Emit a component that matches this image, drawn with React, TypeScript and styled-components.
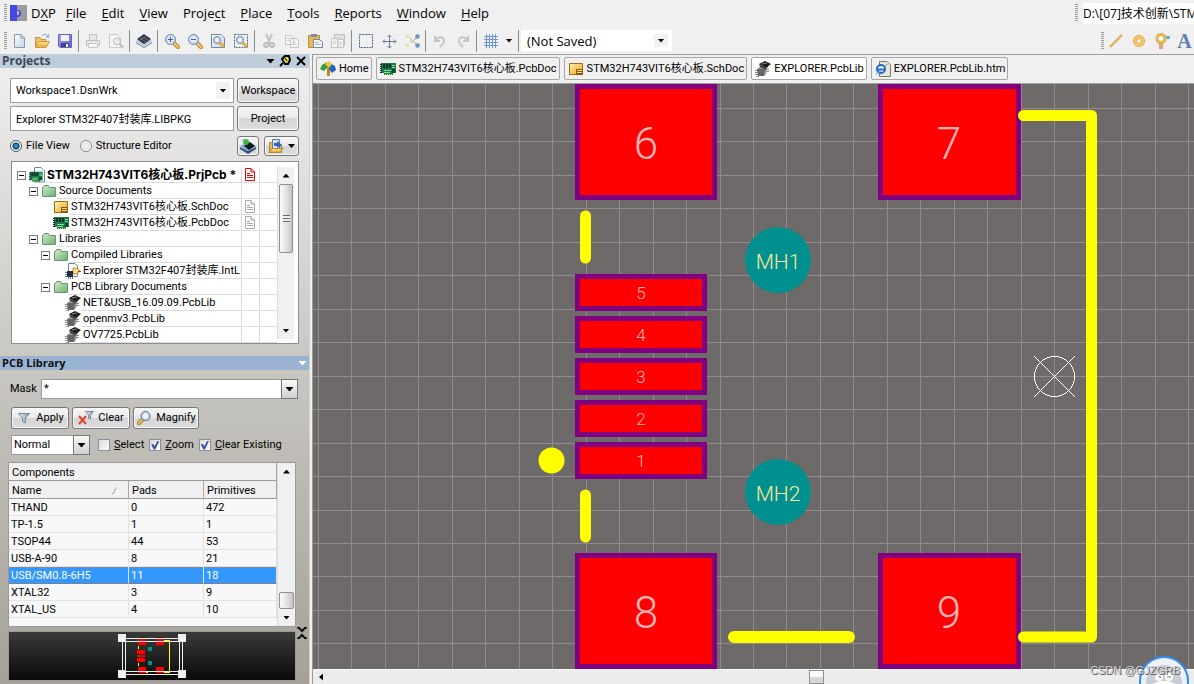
import React from 'react';
import styled, { createGlobalStyle, css } from 'styled-components';

const UI_FONT = `Roboto, "Noto Sans CJK SC", sans-serif`;
const MENU_FONT = `"Open Sans", "Noto Sans CJK SC", sans-serif`;
const STROKE_FONT = `Roboto, sans-serif`;

const GlobalStyle = createGlobalStyle`
  *, *::before, *::after { box-sizing: border-box; }
  body { margin: 0; background: #f0f0f0; color: #000; font: 11px/16px ${UI_FONT}; }
  button, input, select { font: inherit; color: inherit; margin: 0; padding: 0; }
  svg { display: block; flex: none; }
`;

/* ---------- icons ---------- */

const Gradients = () => (
  <svg width="0" height="0" style={{ position: 'absolute' }} aria-hidden="true">
    <defs>
      <linearGradient id="gFolder" x1="0" y1="0" x2="0" y2="1">
        <stop offset="0" stopColor="#ffe9a0" />
        <stop offset="1" stopColor="#e2a02c" />
      </linearGradient>
      <linearGradient id="gGreen" x1="0" y1="0" x2="1" y2="1">
        <stop offset="0" stopColor="#cdeccb" />
        <stop offset="1" stopColor="#6fb075" />
      </linearGradient>
      <linearGradient id="gPage" x1="0" y1="0" x2="1" y2="1">
        <stop offset="0" stopColor="#ffffff" />
        <stop offset="1" stopColor="#c3d3e4" />
      </linearGradient>
      <linearGradient id="gSave" x1="0" y1="0" x2="1" y2="1">
        <stop offset="0" stopColor="#a9a9f4" />
        <stop offset="1" stopColor="#5c5cd0" />
      </linearGradient>
      <linearGradient id="gSch" x1="0" y1="0" x2="1" y2="1">
        <stop offset="0" stopColor="#fff3b0" />
        <stop offset="1" stopColor="#e8a11d" />
      </linearGradient>
      <linearGradient id="gFunnel" x1="0" y1="0" x2="1" y2="0">
        <stop offset="0" stopColor="#f4f8fc" />
        <stop offset="1" stopColor="#7f93ab" />
      </linearGradient>
      <radialGradient id="gLens">
        <stop offset="0" stopColor="#ffffff" />
        <stop offset="1" stopColor="#bcd3ee" />
      </radialGradient>
    </defs>
  </svg>
);

const handle = (
  <>
    <path d="M10.500 10.500L14 14" stroke="#b98a3c" strokeWidth="4" strokeLinecap="round" />
    <path d="M10.500 10.500L14 14" stroke="#f5c860" strokeWidth="2" strokeLinecap="round" />
  </>
);

const chip = (
  <>
    <path d="M0 9.500h3M0 11.500h3M0 13.500h3M1 15.500h3M11 8.500h3M11 10.500h3" stroke="#8a8a8a" />
    <path d="M2 8L6 5H13L11 13L9 15H3Z" fill="#9a9a9a" />
    <path d="M2 8H10L9 15H3Z" fill="#666" />
    <path d="M4 3L10 0L16 3L11 7Z" fill="#1c1c1c" />
    <path d="M4 3L11 7V9L5 6Z" fill="#444" />
    <path d="M7 3L12 2" stroke="#8c8c8c" />
  </>
);

const board = (
  <>
    <path d="M1 2H16V12H13V14H4V12H1Z" fill="#1d7a48" />
    <path d="M0 3.500h2M0 5.500h2M0 7.500h2M0 9.500h2M0 11.500h2" stroke="#123" />
    <path d="M3 3h2v4H3zM6 3h2v4H6zM9 3h2v4H9z" fill="#0a3322" />
    <path d="M12 4.500h3M12 6.500h3M4 9.500h7M4 11.500h6" stroke="#7fe0a4" />
    <path d="M12 8h3v4h-3z" fill="#0d4a2c" />
    <path d="M5 13.500h1M7 13.500h1M9 13.500h1M11 13.500h1" stroke="#e8d25a" />
  </>
);

const funnel = <path d="M2.500 3.500H13.500L9.500 8V13L6.500 11.500V8Z" fill="url(#gFunnel)" stroke="#7388a2" />;

const glyphs: Record<string, React.ReactNode> = {
  new: <path d="M3.500 1.500H10L13.500 5V14.500H3.500ZM10 1.500V5H13.500" fill="url(#gPage)" stroke="#8699ae" />,
  open: (
    <>
      <path d="M1.500 14V4.500H6L7 6.500H12V9" fill="#f0c468" stroke="#c49238" />
      <path d="M1.500 14.500L4 8.500H15.500L12 14.500Z" fill="url(#gFolder)" stroke="#cc9a3c" />
      <path d="M8 3C10 0 13 1 14 4M12 3.500L14.500 4.500L15 1.500" fill="none" stroke="#7f9fc6" />
    </>
  ),
  save: (
    <>
      <path d="M1.500 1.500H14.500V14.500H3L1.500 13Z" fill="url(#gSave)" stroke="#6464c4" />
      <path d="M4 2h8v6H4z" fill="#eef0ff" />
      <path d="M4 10h8v4H4z" fill="#44448c" />
      <path d="M9 11h2v3H9z" fill="#fff" />
    </>
  ),
  print: (
    <>
      <path d="M4.500 7V1.500H12L11 7M1.500 7.500H14.500V12.500H1.500Z" fill="#e8e8e8" stroke="#c0c0c0" />
      <path d="M3.500 10.500H12.500V14.500H3.500Z" fill="#f6f6f6" stroke="#c6c6c6" />
    </>
  ),
  preview: (
    <>
      <path d="M1.500 1.500H9L12.500 5V14.500H1.500Z" fill="#f6f6f6" stroke="#c8c8c8" />
      <circle cx="9" cy="8.500" r="3.500" fill="#ececec" stroke="#b8b8b8" />
      <path d="M11.500 11L15 14.500" stroke="#bcbcbc" strokeWidth="2" />
    </>
  ),
  layers: (
    <>
      <path d="M0 9L8 14L16 9V10L8 15L0 10Z" fill="#5f7792" />
      <path d="M0 8L8 3L16 8L8 13Z" fill="#a9c3de" />
      <path d="M1 6L8 1L15 6L8 11Z" fill="#2e3640" />
      <path d="M4 5L10 9M6 4L12 7M4 7L10 3" stroke="#66727f" />
    </>
  ),
  zoomin: (
    <>
      {handle}
      <circle cx="6.500" cy="6.500" r="5" fill="url(#gLens)" stroke="#6a87ae" />
      <path d="M6.500 4V9M4 6.500H9" stroke="#3c5c96" />
    </>
  ),
  zoomout: (
    <>
      {handle}
      <circle cx="6.500" cy="6.500" r="5" fill="url(#gLens)" stroke="#6a87ae" />
      <path d="M4 6.500H9" stroke="#3c5c96" />
    </>
  ),
  zoomdoc: (
    <>
      <path d="M1.500 1.500H11L14.500 5V14.500H1.500Z" fill="url(#gPage)" stroke="#6f86a3" />
      <circle cx="7" cy="7" r="3.500" fill="url(#gLens)" stroke="#6a87ae" />
      <path d="M10 10L13 13" stroke="#e0aa4c" strokeWidth="3" strokeLinecap="round" />
    </>
  ),
  zoomsel: (
    <>
      <path d="M1.500 1.500H14.500V14.500H1.500Z" fill="none" stroke="#4d6487" strokeDasharray="2 1" />
      <circle cx="7" cy="7" r="3.500" fill="url(#gLens)" stroke="#6a87ae" />
      <path d="M10 10L13 13" stroke="#e0aa4c" strokeWidth="3" strokeLinecap="round" />
    </>
  ),
  cut: (
    <>
      <path d="M5 1L9 10M11 1L7 10" stroke="#c2c2c2" strokeWidth="2" />
      <circle cx="5" cy="12" r="2" fill="none" stroke="#bcbcbc" strokeWidth="2" />
      <circle cx="11" cy="12" r="2" fill="none" stroke="#bcbcbc" strokeWidth="2" />
    </>
  ),
  copy: (
    <>
      <path d="M1.500 2.500H7L9.500 5V11.500H1.500ZM6.500 5.500H12L14.500 8V14.500H6.500Z" fill="#f6f6f6" stroke="#c4c4c4" />
      <path d="M3 5.500h3M3 7.500h3M8 9.500h4M8 11.500h5" stroke="#d0d0d0" />
    </>
  ),
  paste: (
    <>
      <path d="M1.500 2.500H12.500V14.500H1.500Z" fill="#e9b85a" stroke="#b98a3c" />
      <path d="M4 1h6v3H4z" fill="#7f8fa3" />
      <path d="M6.500 6.500H12L15.500 9V14.500H6.500Z" fill="#f5f9fe" stroke="#7389a2" />
      <path d="M8 9.500h4M8 11.500h6" stroke="#9db3cc" />
    </>
  ),
  pasteall: (
    <>
      <path d="M4.500 1.500H14.500V12.500H4.500Z" fill="#dedede" stroke="#c0c0c0" />
      <path d="M1.500 5.500H8V14.500H1.500ZM7.500 6.500H13.500V14.500H7.500Z" fill="#f4f4f4" stroke="#c4c4c4" />
      <path d="M3 8.500h3M3 10.500h3M9 9.500h3M9 11.500h3" stroke="#ccc" />
    </>
  ),
  select: <path d="M1.500 1.500H14.500V14.500H1.500Z" fill="none" stroke="#47608a" strokeDasharray="2 1" />,
  move: (
    <path
      d="M8.500 2V15M2 8.500H15M6.500 4L8.500 2L10.500 4M6.500 13L8.500 15L10.500 13M4 6.500L2 8.500L4 10.500M13 6.500L15 8.500L13 10.500"
      fill="none"
      stroke="#6d7f98"
    />
  ),
  deselect: (
    <>
      <path d="M6 5L13 12M8 9L13 4" stroke="#5f7fae" strokeDasharray="2 1" />
      <path d="M12 2h3v3h-3zM12 11h3v3h-3z" fill="#8aa2c8" stroke="#5f7fae" />
      <path d="M2 2h3v3H2zM6 7h3v3H6zM2 11h3v3H2z" fill="#ecdc9c" />
    </>
  ),
  undo: <path d="M3 3V8H8M3.500 7.500C6 3 12 3 12 8C12 11 10 12 8 14" fill="none" stroke="#c6c6c6" strokeWidth="2" />,
  redo: <path d="M13 3V8H8M12.500 7.500C10 3 4 3 4 8C4 11 6 12 8 14" fill="none" stroke="#c6c6c6" strokeWidth="2" />,
  grid: <path d="M3.500 1V15M6.500 1V15M9.500 1V15M12.500 1V15M1 3.500H15M1 6.500H15M1 9.500H15M1 12.500H15" stroke="#6d93d8" />,
  line: (
    <>
      <path d="M2 14L14 2" stroke="#cf9436" strokeWidth="2" />
      <path d="M2 14L14 2" stroke="#f7c65c" />
    </>
  ),
  pad: (
    <>
      <circle cx="8" cy="8" r="4" fill="none" stroke="#c99c48" strokeWidth="4" />
      <circle cx="8" cy="8" r="4" fill="none" stroke="#f7c65c" strokeWidth="3" />
    </>
  ),
  via: (
    <>
      <path d="M9 4.500H16" stroke="#57b4dc" strokeWidth="3" />
      <path d="M7 8V16" stroke="#dca878" strokeWidth="4" />
      <circle cx="7" cy="5.500" r="4" fill="#fff" stroke="#c99c48" strokeWidth="3" />
      <circle cx="7" cy="5.500" r="4" fill="none" stroke="#f3bd4a" strokeWidth="2" />
    </>
  ),
  home: (
    <>
      <path d="M7 7h3v8H7z" fill="#b98a20" />
      <path d="M0 8L2 4L7 1L8 6L4 10Z" fill="#3f9a3c" />
      <path d="M7 5L10 2L15 5L16 9L12 12L9 8Z" fill="#2663b5" />
      <path d="M5 3L9 0L12 3L9 7Z" fill="#f0c830" />
    </>
  ),
  board,
  chip,
  sch: (
    <>
      <path d="M1.500 2.500H14.500V13.500H1.500Z" fill="url(#gSch)" stroke="#9a6d14" />
      <path d="M8 8h7v6H8z" fill="#8a5a12" />
      <path d="M9 9.500h5M9 11.500h5" stroke="#ffd95e" />
    </>
  ),
  htm: (
    <>
      <path d="M4.500 0.500H12L15.500 4V15.500H4.500Z" fill="#e9e6cf" stroke="#777" />
      <circle cx="6" cy="8" r="4" fill="#fff" stroke="#2566cc" strokeWidth="2" />
      <path d="M3 8.500H10" stroke="#2566cc" strokeWidth="2" />
      <path d="M1 13C4 12 10 7 12 3" fill="none" stroke="#5a94e4" />
    </>
  ),
  folder: <path d="M1.500 13.500V4.500H2.500L3.500 2.500H7.500L8.500 4.500H14.500V13.500Z" fill="url(#gGreen)" stroke="#6d966f" />,
  project: (
    <>
      <path d="M5.500 0.500H12L15.500 4V15H5.500Z" fill="#f6f9fd" stroke="#6d86a6" />
      <g transform="translate(0 3) scale(0.850)">{board}</g>
    </>
  ),
  intlib: (
    <>
      <path d="M3.500 0.500H10L12.500 3V13.500H3.500Z" fill="#fff" stroke="#6f86a3" />
      <path d="M8 5H11L15 8L11 11H8Z" fill="#ffe08a" stroke="#d0801a" />
      <path d="M13 8.500h3" stroke="#d02a1a" />
      <path d="M2 8h6v6H2z" fill="#26303c" />
      <path d="M0 9.500h2M0 11.500h2M0 13.500h2M3.500 16v-2M5.500 16v-2M7.500 16v-2" stroke="#4f79b8" />
    </>
  ),
  docgray: <path d="M1.500 0.500H7L10.500 4V12.500H1.500ZM7 0.500V4H10.500M3 5.500H6M3 7.500H9M3 9.500H9" fill="none" stroke="#a9a9a9" />,
  docred: <path d="M1.500 0.500H7L10.500 4V12.500H1.500ZM7 0.500V4H10.500M3 5.500H6M3 7.500H9M3 9.500H9" fill="none" stroke="#f00000" />,
  funnel,
  clear: (
    <>
      <path d="M7.500 1.500H15.500L12.500 5V9L10.500 8V5Z" fill="url(#gFunnel)" stroke="#7388a2" />
      <path d="M1 6L8 14M8 6L1 14" stroke="#e4452a" strokeWidth="2" />
    </>
  ),
  magnify: (
    <>
      <path d="M6 10L3 13" stroke="#a8842a" strokeWidth="4" strokeLinecap="round" />
      <path d="M6 10L3 13" stroke="#e8c65a" strokeWidth="2" strokeLinecap="round" />
      <circle cx="9.500" cy="6" r="4.500" fill="url(#gLens)" stroke="#54698c" />
    </>
  ),
  stack: (
    <>
      <path d="M0 9L8 13L16 9V11L8 16L0 11Z" fill="#30527e" />
      <path d="M0 8L8 4L16 8L8 13Z" fill="#7fabdf" />
      <path d="M4 8L10 4L15 8L9 12Z" fill="#101820" />
      <circle cx="6" cy="4" r="3" fill="#46b04a" />
      <path d="M1 3L4 1" stroke="#a9c3de" />
    </>
  ),
  folderdoc: (
    <>
      <path d="M1.500 4.500h4l1 2h7v8h-12z" fill="#e9b64e" stroke="#b98a3c" />
      <path d="M4.500 1.500H11.500V11.500H4.500Z" fill="#dce9fa" stroke="#4f79b8" />
      <path d="M6 5H9V3L14 7L9 10V8H6Z" fill="#2f66c0" />
      <path d="M1 14.500L4 10.500H15L12 14.500Z" fill="url(#gFolder)" stroke="#b98526" />
    </>
  ),
  pin: (
    <>
      <path d="M1 11L4 8" stroke="#000" strokeWidth="2" />
      <path d="M3 4L6 1H10L11 5L9 9H6Z" fill="#e8dc3c" stroke="#000" strokeWidth="2" />
      <path d="M6 3L8 6" stroke="#000" />
    </>
  ),
  close: <path d="M2 2L10 10M10 2L2 10" stroke="#000" strokeWidth="2" />,
};

const Icon = ({ name, size = 16 }: { name: string; size?: number }) => (
  <svg width={size} height={size} viewBox={`0 0 ${size} ${size}`} fill="none" aria-hidden="true">
    {glyphs[name]}
  </svg>
);

const Caret = styled.span<{ $up?: boolean; $left?: boolean; $small?: boolean; $light?: boolean }>`
  width: ${(p) => (p.$small ? 7 : 9)}px;
  height: ${(p) => (p.$small ? 4 : 5)}px;
  flex: none;
  background: ${(p) => (p.$light ? '#fff' : '#000')};
  clip-path: ${(p) => (p.$up ? 'polygon(50% 0, 100% 100%, 0 100%)' : 'polygon(0 0, 100% 0, 50% 100%)')};
  ${(p) =>
    p.$left &&
    css`
      width: 4px;
      height: 7px;
      clip-path: polygon(100% 0, 100% 100%, 0 50%);
    `}
`;

/* ---------- frame and top bars ---------- */

const Shell = styled.div`
  display: flex;
  flex-direction: column;
  height: 100vh;
  overflow: hidden;
`;

const MenuBar = styled.nav`
  display: flex;
  align-items: center;
  height: 27px;
  padding: 0 0 1px 4px;
  font: 13px/20px ${MENU_FONT};
`;

const Grip = styled.span`
  width: 3px;
  height: 18px;
  flex: none;
  background: repeating-linear-gradient(#9a9a9a 0 1px, transparent 1px 2px);
`;

const Logo = styled.svg`
  margin: 0 4px 0 3px;
`;

const MenuItem = styled.button`
  border: 0;
  background: none;
  margin-right: 15px;
  white-space: nowrap;
  u {
    text-underline-offset: 2px;
  }
  &:first-of-type {
    margin-right: 10px;
  }
`;

const PathGroup = styled.div`
  display: flex;
  align-items: center;
  gap: 5px;
  width: 119px;
  margin-left: auto;
`;

const PathField = styled.input`
  flex: 1;
  min-width: 0;
  height: 21px;
  border: 0;
  padding-left: 0;
  background: #fff;
  && {
    font: 12px/20px ${MENU_FONT};
  }
`;

const ToolBar = styled.div`
  display: flex;
  align-items: center;
  height: 27px;
  padding-left: 4px;
`;

const Tool = styled.button<{ $narrow?: boolean }>`
  display: grid;
  place-items: center;
  flex: none;
  width: ${(p) => (p.$narrow ? 14 : 23)}px;
  height: 22px;
  border: 0;
  background: none;
`;

const Divider = styled.span`
  width: 1px;
  height: 22px;
  margin: 0 2px;
  flex: none;
  background: #8c8c8c;
`;

const ToolGroup = styled.div`
  display: flex;
  align-items: center;
  width: 93px;
  margin-left: auto;
  overflow: hidden;
`;

const LetterTool = styled(Tool)`
  color: #5f7fb4;
  && {
    font: bold 20px/22px "Liberation Serif", serif;
  }
`;

const Combo = styled.span<{ $width?: number; $height: number; $flat?: boolean; $inset?: number; $font?: string }>`
  position: relative;
  display: flex;
  flex: ${(p) => (p.$width ? 'none' : '1')};
  width: ${(p) => (p.$width ? `${p.$width}px` : 'auto')};
  height: ${(p) => p.$height}px;
  min-width: 0;
  select {
    appearance: none;
    flex: 1;
    min-width: 0;
    padding: 0 20px 0 ${(p) => p.$inset ?? 5}px;
    border: ${(p) => (p.$flat ? '0' : '1px solid #9b9ba3')};
    border-radius: 0;
    background: #fff;
    font: ${(p) => p.$font || 'inherit'};
  }
`;

const ComboArrow = styled.span<{ $raised?: boolean }>`
  position: absolute;
  inset: ${(p) => (p.$raised ? '0 0 0 auto' : '4px 4px 4px auto')};
  width: ${(p) => (p.$raised ? 17 : 14)}px;
  display: grid;
  place-items: center;
  pointer-events: none;
  background: ${(p) => (p.$raised ? 'linear-gradient(#fafafa, #d0d0d0)' : '#f2f2f2')};
  border: ${(p) => (p.$raised ? '1px solid #77777c' : '0')};
`;

const Body = styled.div`
  display: flex;
  flex: 1;
  min-height: 0;
`;

/* ---------- side panels ---------- */

const Side = styled.aside`
  display: flex;
  flex-direction: column;
  width: 309px;
  flex: none;
  background: linear-gradient(#f0f0f0, #c8c6c1 50%, #a5a198);
`;

const Splitter = styled.div`
  width: 4px;
  flex: none;
  background: #f0f0f0;
  border-left: 1px solid #d0d0d0;
  border-right: 1px solid #9a9a9a;
`;

const PanelHead = styled.h2<{ $active?: boolean }>`
  display: flex;
  align-items: center;
  gap: 4px;
  height: 14px;
  margin: 0;
  padding: 0 2px;
  flex: none;
  color: ${(p) => (p.$active ? '#111' : '#3c4956')};
  background: ${(p) => (p.$active ? '#9ab3d3' : '#bfcddb')};
  font: bold ${(p) => (p.$active ? 11 : 12)}px/16px ${MENU_FONT};
  span:first-child {
    flex: 1;
  }
`;

const HeadTool = styled.button`
  display: grid;
  place-items: center;
  border: 0;
  background: none;
  height: 12px;
`;

const ProjectsArea = styled.div`
  display: flex;
  flex-direction: column;
  gap: 3px;
  padding: 10px 10px 12px;
`;

const Row = styled.div<{ $gap?: number; $height?: number }>`
  display: flex;
  align-items: center;
  gap: ${(p) => p.$gap ?? 3}px;
  height: ${(p) => (p.$height ? `${p.$height}px` : 'auto')};
`;

const Field = styled.input<{ $height: number; $inset?: number }>`
  flex: 1;
  min-width: 0;
  height: ${(p) => p.$height}px;
  border: 1px solid #9b9ba3;
  padding: 0 5px 2px ${(p) => p.$inset ?? 5}px;
  background: #fff;
`;

const Push = styled.button<{ $width: number; $height: number }>`
  display: flex;
  align-items: center;
  justify-content: center;
  gap: 4px;
  flex: none;
  width: ${(p) => p.$width}px;
  height: ${(p) => p.$height}px;
  border: 1px solid #77777c;
  border-radius: 3px;
  background: linear-gradient(#f6f6f6, #e9e9e9 50%, #d4d4d4 50%, #dedede);
  box-shadow: inset 0 0 0 1px #f8f8f8;
  white-space: nowrap;
`;

const Choice = styled.label`
  display: flex;
  align-items: center;
  gap: 4px;
  white-space: nowrap;
`;

const Choices = styled.div`
  display: flex;
  flex: 1;
  gap: 10px;
`;

const Spacer = styled.span`
  flex: 1;
`;

const Radio = styled.input`
  appearance: none;
  width: 12px;
  height: 12px;
  border: 1px solid #8b8b8b;
  border-radius: 50%;
  background: radial-gradient(#f4f4f4, #d8d8d8);
  box-shadow: inset 0 0 0 1px #fff;
  &:checked {
    border-color: #4a5560;
    background: radial-gradient(#38c0f0, #0b3c66 45%, #e8eef4 55%);
  }
`;

const Check = styled.input`
  appearance: none;
  display: grid;
  place-items: center;
  width: 12px;
  height: 12px;
  border: 1px solid #8b8f98;
  background: linear-gradient(135deg, #d6d8dc, #fff);
  &:checked::before {
    content: '';
    width: 8px;
    height: 9px;
    background: #3450a0;
    clip-path: polygon(0 45%, 25% 40%, 42% 65%, 82% 0, 100% 5%, 50% 100%, 32% 100%);
  }
`;

const TreeBox = styled.div`
  display: flex;
  height: 183px;
  margin-left: 1px;
  padding: 5px 4px 0 5px;
  border: 1px solid #8e8e92;
  background: #fff;
`;

const Tree = styled.ul`
  flex: 1;
  min-width: 0;
  margin: 0;
  padding: 0;
  list-style: none;
  overflow: hidden;
`;

const Node = styled.li<{ $level: number; $bold?: boolean }>`
  display: grid;
  grid-template-columns: minmax(0, 1fr) 18px 18px;
  height: 16px;
  padding-left: ${(p) => p.$level * 12}px;
  ${(p) =>
    p.$bold &&
    css`
      font: bold 12px/15px Inter, "Noto Sans CJK SC", sans-serif;
    `}
`;

const NodeMain = styled.div`
  display: flex;
  align-items: center;
  min-width: 0;
`;

const NodeLabel = styled.span`
  flex: 1;
  height: 16px;
  padding-left: 2px;
  border-bottom: 1px solid #dcdcdc;
  white-space: nowrap;
  overflow: hidden;
  line-height: 15px;
`;

const NodeCell = styled.div`
  display: grid;
  place-items: center;
  border-left: 1px solid #dcdcdc;
  border-bottom: 1px solid #dcdcdc;
`;

const Expander = styled.button<{ $hidden?: boolean }>`
  width: 9px;
  height: 9px;
  margin: 0 3px 0 0;
  flex: none;
  border: 1px solid #7d7d7d;
  background: linear-gradient(#000, #000) center / 5px 1px no-repeat #fff;
  visibility: ${(p) => (p.$hidden ? 'hidden' : 'visible')};
`;

const VScroll = styled.div<{ $width: number; $clear?: number }>`
  display: flex;
  flex-direction: column;
  width: ${(p) => p.$width}px;
  margin-bottom: ${(p) => p.$clear ?? 0}px;
  flex: none;
  border-left: 1px solid #dcdcdc;
  background: #f0f0f0;
`;

const ScrollArrow = styled.button<{ $size: number }>`
  display: grid;
  place-items: center;
  height: ${(p) => p.$size}px;
  border: 0;
  background: none;
  flex: none;
`;

const Thumb = styled.span<{ $height: number }>`
  display: grid;
  place-content: center;
  height: ${(p) => p.$height}px;
  margin: 0 1px;
  border: 1px solid #8f8f94;
  border-radius: 2px;
  background: linear-gradient(90deg, #fafafa, #e4e4e6 50%, #c4c4c8);
`;

const Ridges = styled.span`
  width: 7px;
  height: 8px;
  background: repeating-linear-gradient(#666 0 1px, #eee 1px 3px);
`;

/* ---------- library panel ---------- */

const LibraryArea = styled.div`
  display: flex;
  flex-direction: column;
  padding: 9px 11px 0 10px;
`;

const DropButton = styled.button`
  display: grid;
  place-items: center;
  width: 17px;
  height: 20px;
  margin-left: -1px;
  border: 1px solid #77777c;
  background: linear-gradient(#fafafa, #d0d0d0);
`;

const MaskLabel = styled.label`
  width: 31px;
  flex: none;
  line-height: 20px;
`;

const ButtonRow = styled(Row)`
  margin: 8px 0 6px 1px;
`;

const OptionRow = styled(Row)`
  margin-left: 1px;
  ${Combo} {
    margin-right: 3px;
  }
`;

const TableBox = styled.div`
  display: flex;
  height: 165px;
  margin: 7px 13px 0 8px;
  border: 1px solid #9a9a9a;
  background: #f8f8f8;
  flex: none;
`;

const TableWrap = styled.div`
  flex: 1;
  min-width: 0;
  overflow: hidden;
`;

const Grid = styled.table`
  width: 100%;
  table-layout: fixed;
  border-collapse: separate;
  border-spacing: 0;
  th,
  td {
    padding: 2px 2px 0;
    height: 17px;
    line-height: 14px;
    text-align: left;
    font-weight: normal;
    white-space: nowrap;
  }
  th {
    height: 18px;
    padding: 2px 3px 0;
    border-bottom: 1px solid #9a9a9a;
    border-right: 1px solid #a8a8a8;
    background: #f0f0f0;
  }
  td {
    border-right: 1px solid #e2e2e2;
    border-bottom: 1px solid #e2e2e2;
  }
`;

const DataRow = styled.tr<{ $selected?: boolean }>`
  ${(p) =>
    p.$selected &&
    css`
      td {
        color: #fff;
        background: #3397fd;
        border-bottom: 1px dotted #c86a1c;
        box-shadow: inset 0 1px 0 #7c8ca0;
      }
    `}
`;

const NameHead = styled.span`
  display: flex;
  align-items: center;
  justify-content: space-between;
  padding-right: 5px;
`;

const PreviewRow = styled.div`
  display: flex;
  padding-left: 8px;
  flex: none;
`;

const Preview = styled.div`
  display: flex;
  align-items: center;
  justify-content: center;
  width: 288px;
  height: 50px;
  margin-top: 4px;
  border: 1px solid #9a9a9a;
  background: linear-gradient(#3a3a3a, #0a0a0a);
`;

const Collapse = styled.button`
  width: 13px;
  height: 12px;
  border: 0;
  background: none;
`;

/* ---------- document area ---------- */

const Main = styled.main`
  position: relative;
  display: flex;
  flex-direction: column;
  flex: 1;
  min-width: 0;
`;

const Tabs = styled.div`
  display: flex;
  align-items: flex-start;
  gap: 4px;
  height: 30px;
  padding: 2px 3px 0;
  flex: none;
  border-top: 1px solid #a0a0a0;
  border-bottom: 1px solid #a0a0a0;
`;

const Tab = styled.button<{ $active?: boolean }>`
  display: flex;
  align-items: center;
  gap: 3px;
  height: 23px;
  padding: 0 2px 0 3px;
  border: 1px solid #a6a6a6;
  border-radius: 2px;
  background: ${(p) => (p.$active ? '#fff' : '#f0f0f0')};
  white-space: nowrap;
`;

const Canvas = styled.svg`
  flex: 1;
  width: 100%;
  min-height: 0;
  background: #6e6a69;
  text {
    font-family: ${STROKE_FONT};
    font-weight: 300;
    text-anchor: middle;
  }
`;

const HScroll = styled.div`
  display: flex;
  align-items: center;
  height: 15px;
  flex: none;
  padding-left: 6px;
  background: #ececec;
  border-top: 1px solid #fafafa;
`;

const HTrack = styled.div`
  flex: 1;
  padding-left: calc(100% * 5 / 9);
  height: 14px;
`;

const HThumb = styled.span`
  display: block;
  width: 15px;
  height: 14px;
  border: 1px solid #8f8f94;
  background: linear-gradient(#fafafa 50%, #d6d6d6 50%);
`;

const Mascot = styled.svg`
  position: absolute;
  right: 4px;
  bottom: 0;
`;

const Watermark = styled.span`
  position: absolute;
  right: 14px;
  bottom: 6px;
  color: #d4d4d4;
  font: 11px/16px "Liberation Sans", sans-serif;
  text-shadow: 1px 1px 0 #555;
`;

/* ---------- data ---------- */

const menus = [
  ['D', 'X', 'P'],
  ['', 'F', 'ile'],
  ['', 'E', 'dit'],
  ['', 'V', 'iew'],
  ['Proje', 'c', 't'],
  ['', 'P', 'lace'],
  ['', 'T', 'ools'],
  ['', 'R', 'eports'],
  ['', 'W', 'indow'],
  ['', 'H', 'elp'],
];

const toolGroups = [
  ['new', 'open', 'save'],
  ['print', 'preview'],
  ['layers'],
  ['zoomin', 'zoomout', 'zoomdoc', 'zoomsel'],
  ['cut', 'copy', 'paste', 'pasteall'],
  ['select', 'move', 'deselect'],
  ['undo', 'redo'],
];

const tabs = [
  { icon: 'home', label: 'Home' },
  { icon: 'board', label: 'STM32H743VIT6核心板.PcbDoc' },
  { icon: 'sch', label: 'STM32H743VIT6核心板.SchDoc' },
  { icon: 'chip', label: 'EXPLORER.PcbLib', active: true },
  { icon: 'htm', label: 'EXPLORER.PcbLib.htm' },
];

const tree = [
  { level: 0, icon: 'project', label: 'STM32H743VIT6核心板.PrjPcb *', open: true, mark: 'docred', bold: true },
  { level: 1, icon: 'folder', label: 'Source Documents', open: true },
  { level: 2, icon: 'sch', label: 'STM32H743VIT6核心板.SchDoc', mark: 'docgray' },
  { level: 2, icon: 'board', label: 'STM32H743VIT6核心板.PcbDoc', mark: 'docgray' },
  { level: 1, icon: 'folder', label: 'Libraries', open: true },
  { level: 2, icon: 'folder', label: 'Compiled Libraries', open: true },
  { level: 3, icon: 'intlib', label: 'Explorer STM32F407封装库.IntL' },
  { level: 2, icon: 'folder', label: 'PCB Library Documents', open: true },
  { level: 3, icon: 'chip', label: 'NET&USB_16.09.09.PcbLib' },
  { level: 3, icon: 'chip', label: 'openmv3.PcbLib' },
  { level: 3, icon: 'chip', label: 'OV7725.PcbLib' },
];

const components = [
  ['THAND', '0', '472'],
  ['TP-1.5', '1', '1'],
  ['TSOP44', '44', '53'],
  ['USB-A-90', '8', '21'],
  ['USB/SM0.8-6H5', '11', '18'],
  ['XTAL32', '3', '9'],
  ['XTAL_US', '4', '10'],
];

const bigPads = [
  { n: '6', x: 262, y: 0, w: 142 },
  { n: '7', x: 565, y: 0, w: 143 },
  { n: '8', x: 262, y: 469, w: 142 },
  { n: '9', x: 565, y: 469, w: 143 },
];

const gridLine = (k: number, start: number) => Math.round(start + k * 33.46) + 0.5;

const Board = () => (
  <Canvas role="img" aria-label="Footprint USB/SM0.8-6H5">
    <g stroke="#8f8c8f" shapeRendering="crispEdges">
      {Array.from({ length: 60 }, (_, k) => (
        <line key={`v${k}`} x1={gridLine(k, 5)} x2={gridLine(k, 5)} y1="0" y2="100%" />
      ))}
      {Array.from({ length: 40 }, (_, k) => (
        <line key={`h${k}`} y1={gridLine(k, 24)} y2={gridLine(k, 24)} x1="0" x2="100%" />
      ))}
    </g>
    {bigPads.map((p) => (
      <g key={p.n}>
        <rect x={p.x} y={p.y} width={p.w} height="116" fill="#800080" />
        <rect x={p.x + 5} y={p.y + 5} width={p.w - 10} height="106" fill="#f00" />
        <text x={p.x + 71} y={p.y + 75} fontSize="44" fill="#ffb4b4">
          {p.n}
        </text>
      </g>
    ))}
    {[5, 4, 3, 2, 1].map((n, i) => (
      <g key={n}>
        <rect x="262" y={190 + i * 42} width="132" height="37" fill="#800080" />
        <rect x="267" y={195 + i * 42} width="122" height="27" fill="#f00" />
        <text x="328" y={215 + i * 42} fontSize="17" fill="#ffb4b4">
          {n}
        </text>
      </g>
    ))}
    {[
      { t: 'MH1', y: 176 },
      { t: 'MH2', y: 408 },
    ].map((m) => (
      <g key={m.t}>
        <circle cx="465" cy={m.y} r="33" fill="#009090" />
        <text x="465" y={m.y + 9} fontSize="21" fill="#ffeb96">
          {m.t}
        </text>
      </g>
    ))}
    <g fill="none" stroke="#ff0" strokeWidth="11" strokeLinecap="round" strokeLinejoin="round">
      <path d="M272.500 132V174M272.500 411V453" />
      <path d="M421 553H536" strokeWidth="12" />
      <path d="M710.500 31.500H778.500V553H710.500" />
    </g>
    <circle cx="238.500" cy="376.500" r="13" fill="#ff0" />
    <g fill="none" stroke="#fff" shapeRendering="crispEdges">
      <circle cx="741.500" cy="292.500" r="20" />
      <path d="M721 272L762 313M762 272L721 313" />
    </g>
  </Canvas>
);

const MiniMap = () => (
  <svg width="68" height="44" viewBox="0 0 68 44" aria-hidden="true" shapeRendering="crispEdges">
    <path d="M46 6.500H51.500V38.500H42M20.500 12V15M20.500 29V32M26 38.500H30" fill="none" stroke="#ff0" />
    <path d="M20 5h8v6h-8zM38 5h8v6h-8zM20 33h8v6h-8zM38 33h8v6h-8zM19 16h8v4h-8zM19 21h8v2h-8zM19 24h8v4h-8z" fill="#f00" />
    <path d="M30 13h4v4h-4zM30 27h4v4h-4z" fill="#009090" />
    <path d="M4.500 4.500H64.500V40.500H4.500ZM7.500 7.500H61.500V37.500H7.500Z" fill="none" stroke="#f0f0f0" />
    <path d="M0 0h8v8H0zM60 0h8v8h-8zM0 36h8v8H0zM60 36h8v8h-8z" fill="#f0f0f0" />
  </svg>
);

const ProjectsPanel = () => (
  <>
    <PanelHead>
      <span>Projects</span>
      <HeadTool aria-label="Panel menu">
        <Caret />
      </HeadTool>
      <HeadTool aria-label="Pin">
        <Icon name="pin" size={12} />
      </HeadTool>
      <HeadTool aria-label="Close">
        <Icon name="close" size={12} />
      </HeadTool>
    </PanelHead>
    <ProjectsArea>
      <Row>
        <Combo $height={25}>
          <select aria-label="Workspace file">
            <option>Workspace1.DsnWrk</option>
          </select>
          <ComboArrow>
            <Caret $small />
          </ComboArrow>
        </Combo>
        <Push $width={62} $height={25}>
          Workspace
        </Push>
      </Row>
      <Row>
        <Field $height={25} aria-label="Project file" defaultValue="Explorer STM32F407封装库.LIBPKG" />
        <Push $width={62} $height={25}>
          Project
        </Push>
      </Row>
      <Row $gap={5} $height={24}>
        <Choices>
          <Choice>
            <Radio type="radio" name="view" defaultChecked />
            File View
          </Choice>
          <Choice>
            <Radio type="radio" name="view" />
            Structure Editor
          </Choice>
        </Choices>
        <Push $width={22} $height={20} aria-label="Layers">
          <Icon name="stack" />
        </Push>
        <Push $width={35} $height={20} aria-label="Open documents">
          <Icon name="folderdoc" />
          <Caret $small />
        </Push>
      </Row>
      <TreeBox>
        <Tree>
          {tree.map((n) => (
            <Node key={n.label} $level={n.level} $bold={n.bold}>
              <NodeMain>
                <Expander $hidden={!n.open} aria-label="Collapse" />
                <Icon name={n.icon} />
                <NodeLabel>{n.label}</NodeLabel>
              </NodeMain>
              <NodeCell>{n.mark && <Icon name={n.mark} size={13} />}</NodeCell>
              <NodeCell />
            </Node>
          ))}
        </Tree>
        <VScroll $width={17} $clear={4}>
          <ScrollArrow $size={17} aria-label="Scroll up">
            <Caret $up $small />
          </ScrollArrow>
          <Thumb $height={69}>
            <Ridges />
          </Thumb>
          <Spacer />
          <ScrollArrow $size={17} aria-label="Scroll down">
            <Caret $small />
          </ScrollArrow>
        </VScroll>
      </TreeBox>
    </ProjectsArea>
  </>
);

const LibraryPanel = () => (
  <>
    <PanelHead $active>
      <span>PCB Library</span>
      <HeadTool aria-label="Panel menu">
        <Caret $light />
      </HeadTool>
    </PanelHead>
    <LibraryArea>
      <Row $gap={0}>
        <MaskLabel htmlFor="mask">Mask</MaskLabel>
        <Field id="mask" $height={20} $inset={2} defaultValue="*" />
        <DropButton aria-label="Mask history">
          <Caret />
        </DropButton>
      </Row>
      <ButtonRow>
        <Push $width={58} $height={22}>
          <Icon name="funnel" /> Apply
        </Push>
        <Push $width={58} $height={22}>
          <Icon name="clear" /> Clear
        </Push>
        <Push $width={66} $height={22}>
          <Icon name="magnify" /> Magnify
        </Push>
      </ButtonRow>
      <OptionRow $gap={5}>
        <Combo $width={79} $height={20} $inset={2}>
          <select aria-label="Highlight mode">
            <option>Normal</option>
          </select>
          <ComboArrow $raised>
            <Caret />
          </ComboArrow>
        </Combo>
        <Choice>
          <Check type="checkbox" />
          <span>
            <u>S</u>elect
          </span>
        </Choice>
        <Choice>
          <Check type="checkbox" defaultChecked />
          <span>
            <u>Z</u>oom
          </span>
        </Choice>
        <Choice>
          <Check type="checkbox" defaultChecked />
          <span>
            <u>C</u>lear Existing
          </span>
        </Choice>
      </OptionRow>
    </LibraryArea>
    <TableBox>
      <TableWrap>
        <Grid>
          <colgroup>
            <col width="120" />
            <col width="75" />
            <col />
          </colgroup>
          <thead>
            <tr>
              <th colSpan={3}>Components</th>
            </tr>
            <tr>
              <th>
                <NameHead>
                  Name
                  <svg width="8" height="8" viewBox="0 0 8 8" fill="none" aria-hidden="true">
                    <path d="M4.500 0.500L7.500 7.500H0.500" stroke="#fff" />
                    <path d="M4.500 0.500L0.500 7.500" stroke="#999" />
                  </svg>
                </NameHead>
              </th>
              <th>Pads</th>
              <th>Primitives</th>
            </tr>
          </thead>
          <tbody>
            {components.map((c) => (
              <DataRow key={c[0]} $selected={c[0] === 'USB/SM0.8-6H5'}>
                <td>{c[0]}</td>
                <td>{c[1]}</td>
                <td>{c[2]}</td>
              </DataRow>
            ))}
          </tbody>
        </Grid>
      </TableWrap>
      <VScroll $width={18}>
        <ScrollArrow $size={17} aria-label="Scroll up">
          <Caret $up $small />
        </ScrollArrow>
        <Spacer />
        <Thumb $height={17} />
        <ScrollArrow $size={17} aria-label="Scroll down">
          <Caret $small />
        </ScrollArrow>
      </VScroll>
    </TableBox>
    <PreviewRow>
      <Preview>
        <MiniMap />
      </Preview>
      <Collapse aria-label="Collapse preview">
        <svg width="12" height="12" viewBox="0 0 12 12" fill="none">
          <path d="M1 0.500H4M8 0.500H11M2 0L6 4L10 0M1 11.500H4M8 11.500H11M2 12L6 8L10 12" stroke="#111" strokeWidth="2" />
        </svg>
      </Collapse>
    </PreviewRow>
  </>
);

export default function App() {
  return (
    <Shell>
      <GlobalStyle />
      <Gradients />
      <MenuBar>
        <Grip />
        <Logo width="17" height="16" viewBox="0 0 17 16" aria-hidden="true">
          <path d="M7 0h10v16H7z" fill="#9c9c9c" />
          <path d="M0 0h7v5h2l2 2v3l-2 2H7v4H0z" fill="#4646e0" />
          <path d="M7 6h2v4H7z" fill="#b8b8f4" />
        </Logo>
        {menus.map(([a, b, c]) => (
          <MenuItem key={a + b + c}>
            {a}
            <u>{b}</u>
            {c}
          </MenuItem>
        ))}
        <PathGroup>
          <Grip />
          <PathField aria-label="Document path" defaultValue="D:\[07]技术创新\STM32" />
        </PathGroup>
      </MenuBar>
      <ToolBar>
        <Grip />
        {toolGroups.map((group) => (
          <React.Fragment key={group[0]}>
            {group.map((name) => (
              <Tool key={name} aria-label={name}>
                <Icon name={name} />
              </Tool>
            ))}
            <Divider />
          </React.Fragment>
        ))}
        <Tool aria-label="grid">
          <Icon name="grid" />
        </Tool>
        <Tool $narrow aria-label="grid options">
          <Caret $small />
        </Tool>
        <Divider />
        <Combo $width={151} $height={21} $flat $inset={6} $font={`13px/20px ${MENU_FONT}`}>
          <select aria-label="Filter">
            <option>(Not Saved)</option>
          </select>
          <ComboArrow>
            <Caret $small />
          </ComboArrow>
        </Combo>
        <ToolGroup>
          <Grip />
          <Tool aria-label="line">
            <Icon name="line" />
          </Tool>
          <Tool aria-label="pad">
            <Icon name="pad" />
          </Tool>
          <Tool aria-label="via">
            <Icon name="via" />
          </Tool>
          <LetterTool>A</LetterTool>
        </ToolGroup>
      </ToolBar>
      <Body>
        <Side>
          <ProjectsPanel />
          <LibraryPanel />
        </Side>
        <Splitter />
        <Main>
          <Tabs role="tablist">
            {tabs.map((t) => (
              <Tab key={t.label} role="tab" aria-selected={!!t.active} $active={t.active}>
                <Icon name={t.icon} />
                {t.label}
              </Tab>
            ))}
          </Tabs>
          <Board />
          <HScroll>
            <Caret $left />
            <HTrack>
              <HThumb />
            </HTrack>
          </HScroll>
          <Mascot width="52" height="29" viewBox="0 0 52 29" aria-hidden="true">
            <circle cx="26" cy="26" r="24" fill="#eef1f8" stroke="#2f8cf0" strokeWidth="2" />
            <circle cx="26" cy="28" r="18" fill="#c9cdd6" />
            <circle cx="21" cy="22" r="4" fill="#fff" />
            <circle cx="31" cy="22" r="4" fill="#fff" />
            <circle cx="22" cy="22" r="1" fill="#777" />
            <path d="M29 22h4" stroke="#777" />
            <path d="M16 29C18 25 34 25 36 29Z" fill="#fff" />
          </Mascot>
          <Watermark>CSDN @GJZGRB</Watermark>
        </Main>
      </Body>
    </Shell>
  );
}
